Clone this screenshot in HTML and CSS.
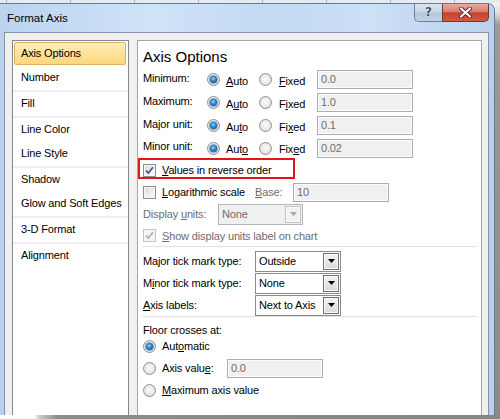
FILE: index.html
```html
<!DOCTYPE html>
<html>
<head>
<meta charset="utf-8">
<title>Format Axis</title>
<link rel="stylesheet" href="styles.css">
</head>
<body>
<div class="page">
  <div class="sheet-strip"></div>
  <div class="main">
    <div class="window">
      <div class="titlebar">
        <div class="title">Format Axis</div>
        <div class="caption-btns">
          <div class="btn-help">?</div>
          <div class="btn-close">
            <svg width="13" height="11" viewBox="0 0 13 11">
              <path d="M2 1.5 L11 9.5 M11 1.5 L2 9.5" stroke="#5a2a22" stroke-width="4" stroke-linecap="round"/>
              <path d="M2 1.5 L11 9.5 M11 1.5 L2 9.5" stroke="#ffffff" stroke-width="2.2" stroke-linecap="round"/>
            </svg>
          </div>
        </div>
      </div>
      <div class="client">
        <div class="nav">
          <div class="nav-item selected">Axis Options</div>
          <div class="nav-item">Number</div>
          <div class="nav-sep"></div>
          <div class="nav-item">Fill</div>
          <div class="nav-sep"></div>
          <div class="nav-item">Line Color</div>
          <div class="nav-item">Line Style</div>
          <div class="nav-sep"></div>
          <div class="nav-item">Shadow</div>
          <div class="nav-item">Glow and Soft Edges</div>
          <div class="nav-sep"></div>
          <div class="nav-item">3-D Format</div>
          <div class="nav-sep"></div>
          <div class="nav-item">Alignment</div>
        </div>
        <div class="pane">
          <div class="heading">Axis Options</div>

          <div class="axis-row">
            <span class="axis-label">Minimum:</span>
            <span class="radio-cell"><span class="radio on"></span></span>
            <span class="choice auto"><u>A</u>uto</span>
            <span class="radio-cell wide"><span class="radio"></span></span>
            <span class="choice fixed"><u>F</u>ixed</span>
            <span class="textbox">0.0</span>
          </div>
          <div class="axis-row">
            <span class="axis-label">Maximum:</span>
            <span class="radio-cell"><span class="radio on"></span></span>
            <span class="choice auto">A<u>u</u>to</span>
            <span class="radio-cell wide"><span class="radio"></span></span>
            <span class="choice fixed">F<u>i</u>xed</span>
            <span class="textbox">1.0</span>
          </div>
          <div class="axis-row">
            <span class="axis-label">Major unit:</span>
            <span class="radio-cell"><span class="radio on"></span></span>
            <span class="choice auto">Au<u>t</u>o</span>
            <span class="radio-cell wide"><span class="radio"></span></span>
            <span class="choice fixed">Fi<u>x</u>ed</span>
            <span class="textbox">0.1</span>
          </div>
          <div class="axis-row last">
            <span class="axis-label">Minor unit:</span>
            <span class="radio-cell"><span class="radio on"></span></span>
            <span class="choice auto">Aut<u>o</u></span>
            <span class="radio-cell wide"><span class="radio"></span></span>
            <span class="choice fixed">Fix<u>e</u>d</span>
            <span class="textbox">0.02</span>
          </div>

          <div class="check-row highlight-host">
            <span class="check-cell"><span class="checkbox">
              <svg width="11" height="11" viewBox="0 0 11 11"><path d="M2 5.5 L4.3 8 L9 2.2" fill="none" stroke="#3f5b9e" stroke-width="1.8"/></svg>
            </span></span>
            <span class="check-text"><u>V</u>alues in reverse order</span>
            <span class="highlight"></span>
          </div>
          <div class="check-row">
            <span class="check-cell"><span class="checkbox"></span></span>
            <span class="check-text log"><u>L</u>ogarithmic scale</span>
            <span class="base-label muted"><u>B</u>ase:</span>
            <span class="textbox">10</span>
          </div>
          <div class="check-row">
            <span class="units-label muted">Display <u>u</u>nits:</span>
            <span class="dropdown disabled narrow">
              <span class="dd-text">None</span>
              <span class="dd-btn"><svg width="7" height="4" viewBox="0 0 7 4"><path d="M0 0 H7 L3.5 4 Z" fill="#a7a7a7"/></svg></span>
            </span>
          </div>
          <div class="check-row short">
            <span class="check-cell"><span class="checkbox disabled">
              <svg width="11" height="11" viewBox="0 0 11 11"><path d="M2 5.5 L4.3 8 L9 2.2" fill="none" stroke="#b4b4b4" stroke-width="1.8"/></svg>
            </span></span>
            <span class="check-text muted"><u>S</u>how display units label on chart</span>
          </div>

          <div class="separator"></div>

          <div class="tick-row">
            <span class="tick-label">Ma<u>j</u>or tick mark type:</span>
            <span class="dropdown">
              <span class="dd-text">Outside</span>
              <span class="dd-btn"><svg width="7" height="4" viewBox="0 0 7 4"><path d="M0 0 H7 L3.5 4 Z" fill="#000"/></svg></span>
            </span>
          </div>
          <div class="tick-row">
            <span class="tick-label">M<u>i</u>nor tick mark type:</span>
            <span class="dropdown">
              <span class="dd-text">None</span>
              <span class="dd-btn"><svg width="7" height="4" viewBox="0 0 7 4"><path d="M0 0 H7 L3.5 4 Z" fill="#000"/></svg></span>
            </span>
          </div>
          <div class="tick-row">
            <span class="tick-label"><u>A</u>xis labels:</span>
            <span class="dropdown">
              <span class="dd-text">Next to Axis</span>
              <span class="dd-btn"><svg width="7" height="4" viewBox="0 0 7 4"><path d="M0 0 H7 L3.5 4 Z" fill="#000"/></svg></span>
            </span>
          </div>

          <div class="separator second"></div>

          <div class="floor-label">Floor crosses at:</div>
          <div class="floor-row">
            <span class="check-cell"><span class="radio on"></span></span>
            <span>Aut<u>o</u>matic</span>
          </div>
          <div class="floor-row">
            <span class="check-cell"><span class="radio"></span></span>
            <span class="axis-value">Axis valu<u>e</u>:</span>
            <span class="textbox">0.0</span>
          </div>
          <div class="floor-row">
            <span class="check-cell"><span class="radio"></span></span>
            <span><u>M</u>aximum axis value</span>
          </div>
        </div>
      </div>
    </div>
    <div class="shade-right"></div>
  </div>
  <div class="bottom-band"></div>
</div>
</body>
</html>
```

FILE: styles.css
```css
html, body {
  margin: 0;
  padding: 0;
}
body {
  font-family: "Liberation Sans", Arial, sans-serif;
  font-size: 11px;
  color: #000;
  background: #ffffff;
}
.page {
  width: 500px;
  height: 419px;
  display: flex;
  flex-direction: column;
  overflow: hidden;
  background: #ffffff;
}
.sheet-strip {
  height: 3px;
  flex: none;
  background-color: #e6ebf1;
  background-image: linear-gradient(to right, transparent 0, transparent 63px, #a9b4c2 63px, #a9b4c2 64px);
  background-size: 64px 3px;
  background-position: 7px 0;
}
.main {
  flex: 1;
  min-height: 0;
  display: flex;
}
.window {
  width: 495px;
  flex: none;
  box-sizing: border-box;
  border-top: 1px solid #6a7b93;
  border-right: 1px solid #6a7b93;
  border-radius: 0 7px 0 0;
  background: linear-gradient(to right, #b9d1ec 0%, #c8ddf4 35%, #c0d7f0 60%, #b8d0ec 100%);
  display: flex;
  flex-direction: column;
  overflow: hidden;
}
.titlebar {
  height: 28px;
  flex: none;
  display: flex;
  justify-content: space-between;
  align-items: flex-start;
  padding-right: 5px;
  background: linear-gradient(to right, #bad3ef 0%, #cfe3f8 30%, #c3daf2 55%, #cce0f6 75%, #b9d2ee 100%);
}
.title {
  padding-left: 7px;
  font-size: 11.5px;
  line-height: 28px;
  color: #000;
}
.caption-btns {
  display: flex;
}
.btn-help {
  width: 28px;
  height: 18px;
  box-sizing: border-box;
  border: 1px solid #6f7f96;
  border-top: none;
  border-right: none;
  border-radius: 0 0 0 5px;
  background: linear-gradient(#dbe5f1 0%, #c6d4e5 48%, #b3c5db 52%, #c3d3e6 100%);
  color: #44546c;
  font-family: "DejaVu Sans", sans-serif;
  font-weight: bold;
  font-size: 12px;
  line-height: 17px;
  text-align: center;
  text-shadow: 0 0 2px #fff;
}
.btn-close {
  width: 47px;
  height: 18px;
  box-sizing: border-box;
  border: 1px solid #6b3a34;
  border-top: none;
  border-radius: 0 0 5px 0;
  background: linear-gradient(#e8aa9c 0%, #d77d6d 45%, #c5412e 52%, #d3583f 100%);
  display: flex;
  align-items: center;
  justify-content: center;
}
.client {
  flex: 1;
  min-height: 0;
  margin: 0 5px 0 4px;
  border: 1px solid #8593a8;
  border-bottom: none;
  background: #f0f0f0;
  padding: 7px 6px 0 7px;
  display: flex;
  gap: 8px;
}
.nav {
  width: 117px;
  box-sizing: border-box;
  border: 1px solid #828790;
  border-bottom: none;
  background: #fff;
  padding: 1px 2px 0 1px;
}
.nav-item {
  height: 23px;
  margin-bottom: 1px;
  box-sizing: border-box;
  border: 1px solid transparent;
  border-radius: 2px;
  padding-left: 6px;
  line-height: 21px;
  white-space: nowrap;
  letter-spacing: -0.15px;
}
.nav-item.selected {
  border-color: #dcb264;
  background: linear-gradient(#fdeeb8 0%, #fde39d 45%, #fcd67c 100%);
}
.nav-sep {
  height: 2px;
  margin: 0 -2px 0 -1px;
  background: #eceef3;
}
.pane {
  width: 345px;
  box-sizing: border-box;
  border: 1px solid #a7a7a7;
  border-bottom: none;
  background: #fff;
  padding: 0 4px 0 5px;
  letter-spacing: -0.15px;
}
.heading {
  margin-top: 7px;
  height: 20px;
  font-size: 15px;
  line-height: 18px;
  letter-spacing: 0;
}
.axis-row {
  height: 23px;
  display: flex;
  align-items: center;
}
.axis-row.last {
  height: 22px;
}
.axis-label {
  width: 64px;
  flex: none;
  padding-bottom: 4px;
}
.radio-cell {
  width: 19px;
  flex: none;
  display: flex;
}
.radio-cell.wide {
  width: 20px;
}
.choice {
  flex: none;
  padding-top: 2px;
}
.choice.auto { width: 33px; }
.choice.fixed { width: 38px; }
.radio {
  width: 13px;
  height: 13px;
  box-sizing: border-box;
  border-radius: 50%;
  border: 1px solid #8d8f91;
  background: radial-gradient(circle at 50% 45%, #fbfbfb 0%, #e8e8e8 55%, #cfd0d1 100%);
  display: flex;
  align-items: center;
  justify-content: center;
}
.radio.on::after {
  content: "";
  width: 7px;
  height: 7px;
  border-radius: 50%;
  background: radial-gradient(circle at 45% 40%, #9fdcff 0%, #2f93e0 35%, #0c4f8e 85%);
  box-shadow: 0 0 0 0.5px #1a4f80;
}
.textbox {
  width: 96px;
  height: 19px;
  flex: none;
  box-sizing: border-box;
  border: 1px solid #abadb3;
  box-shadow: inset 0 0 0 1px #fdfdfd;
  background: #f0f0f0;
  color: #6d6d6d;
  padding-left: 3px;
  line-height: 17px;
}
.check-row {
  height: 22px;
  display: flex;
  align-items: center;
}
.check-row.short {
  height: 21px;
}
.highlight-host {
  position: relative;
}
.highlight {
  position: absolute;
  left: -5px;
  top: -1px;
  width: 157px;
  height: 21px;
  box-sizing: border-box;
  border: 2px solid #e3141c;
  pointer-events: none;
}
.check-cell {
  width: 19px;
  flex: none;
  display: flex;
}
.checkbox {
  width: 13px;
  height: 13px;
  box-sizing: border-box;
  border: 1px solid #8e8f8f;
  background: linear-gradient(135deg, #d9d9d9 0%, #f1f1f1 60%, #fbfbfb 100%);
  box-shadow: inset 0 0 0 1px #f6f6f6;
  display: flex;
  align-items: center;
  justify-content: center;
}
.checkbox.disabled {
  border-color: #c3c3c3;
  background: #f4f4f4;
}
.check-text.log {
  width: 93px;
  flex: none;
}
.muted {
  color: #6d6d6d;
}
.base-label {
  width: 38px;
  flex: none;
}
.units-label {
  width: 75px;
  flex: none;
}
.dropdown {
  width: 86px;
  height: 21px;
  flex: none;
  box-sizing: border-box;
  border: 1px solid #8b8b8b;
  background: #fff;
  display: flex;
  align-items: center;
  justify-content: space-between;
  padding-left: 3px;
  padding-right: 1px;
}
.dropdown.narrow {
  width: 85px;
}
.dropdown.disabled {
  border-color: #b3b6b9;
  background: #f0f0f0;
  color: #6d6d6d;
}
.dd-text {
  white-space: nowrap;
}
.dd-btn {
  width: 16px;
  height: 17px;
  flex: none;
  box-sizing: border-box;
  border: 1px solid #6e6e6e;
  box-shadow: inset 0 0 0 1px #fafafa;
  background: linear-gradient(#f3f3f3 0%, #e6e6e6 50%, #d9d9d9 100%);
  display: flex;
  align-items: center;
  justify-content: center;
}
.dropdown.disabled .dd-btn {
  border-color: #c2c2c2;
  background: #f2f2f2;
}
.separator {
  height: 1px;
  margin: 0 0 3px -1px;
  background: #e2e2e2;
}
.separator.second {
  margin-bottom: 0;
}
.tick-row {
  height: 22px;
  display: flex;
  align-items: center;
}
.tick-label {
  width: 112px;
  flex: none;
}
.floor-label {
  margin-top: 7px;
  line-height: 13px;
  margin-bottom: -2px;
}
.floor-row {
  height: 22px;
  display: flex;
  align-items: center;
}
.axis-value {
  width: 65px;
  flex: none;
}
.shade-right {
  flex: 1;
  background: linear-gradient(#f2f2f2 0px, #e0e0e0 10px, #9a9a9a 22px, #8a8a8a 100%);
}
.bottom-band {
  height: 4px;
  flex: none;
  background: linear-gradient(to right, #ffffff 0px, #ffffff 34px, #c7c7c7 40px, #8c8c8c 58px, #858585 100%);
}
```
